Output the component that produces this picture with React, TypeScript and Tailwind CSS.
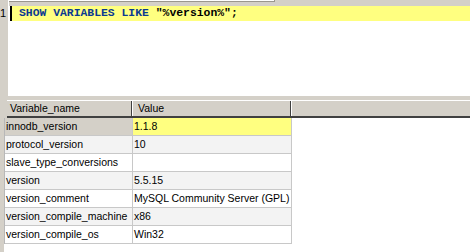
import React from "react";

const rows: [string, string][] = [
  ["innodb_version", "1.1.8"],
  ["protocol_version", "10"],
  ["slave_type_conversions", ""],
  ["version", "5.5.15"],
  ["version_comment", "MySQL Community Server (GPL)"],
  ["version_compile_machine", "x86"],
  ["version_compile_os", "Win32"],
];

export default function App() {
  return (
    <div className="w-[470px] h-[252px] bg-[#d4d0c8] flex flex-col overflow-hidden font-['Liberation_Sans',Arial,sans-serif] text-black">
      {/* editor */}
      <div className="flex h-[96px] shrink-0">
        <div className="w-[8px] pt-[8px] text-[11px] leading-[11px]">1</div>
        <div className="flex-1 flex flex-col border-l border-white">
          <div className="h-[6px] shrink-0">
            <div className="w-[266px] h-[2px] bg-white border-r border-b border-[#9a968e]" />
          </div>
          <div className="flex-1 bg-white pl-[1px]">
            <div className="h-[15px] bg-[#ffff80] flex items-center">
              <div className="w-[2px] h-full bg-black" />
              <div className="ml-[7px] font-['Liberation_Mono',monospace] font-bold text-[11.4px] leading-none whitespace-pre">
                <span className="text-[#0a3a92]">SHOW VARIABLES LIKE</span>
                <span className="text-black"> "%version%";</span>
              </div>
            </div>
          </div>
        </div>
      </div>
      {/* splitter */}
      <div className="h-[4px] shrink-0" />
      {/* header */}
      <div className="flex h-[18px] shrink-0 text-[10.5px]">
        <div className="w-[7px]" />
        <div className="flex-1 flex border-t border-white border-b-2 border-b-[#404040]">
          <div className="w-[125px] flex items-center pl-[3px] border-r border-[#404040]">Variable_name</div>
          <div className="w-[159px] flex items-center pl-[5px] border-l border-white border-r border-r-[#404040]">Value</div>
          <div className="flex-1 border-l border-white" />
        </div>
      </div>
      {/* rows */}
      <div className="flex flex-1">
        <div className="w-[4px] bg-[#d4d0c8]" />
        <div className="flex-1 bg-white">
          <div className="w-[288px] border-l border-[#b8b8b8] text-[10.5px]">
            {rows.map(([k, v], i) => {
              const alt = i % 2 === 1;
              const c1 = i === 0 ? "bg-[#d4d0c8]" : alt ? "bg-[#f3f3f3]" : "bg-white";
              const c2 = i === 0 ? "bg-[#ffff80]" : alt ? "bg-[#f3f3f3]" : "bg-white";
              return (
                <div key={k} className="flex h-[18px] border-b border-[#c8c8c8]">
                  <div className={`w-[128px] flex items-center pl-[1px] border-r border-[#c8c8c8] whitespace-nowrap ${c1}`}>{k}</div>
                  <div className={`w-[159px] flex items-center pl-[1px] border-r border-[#c8c8c8] whitespace-nowrap ${c2}`}>{v}</div>
                </div>
              );
            })}
          </div>
        </div>
      </div>
    </div>
  );
}
